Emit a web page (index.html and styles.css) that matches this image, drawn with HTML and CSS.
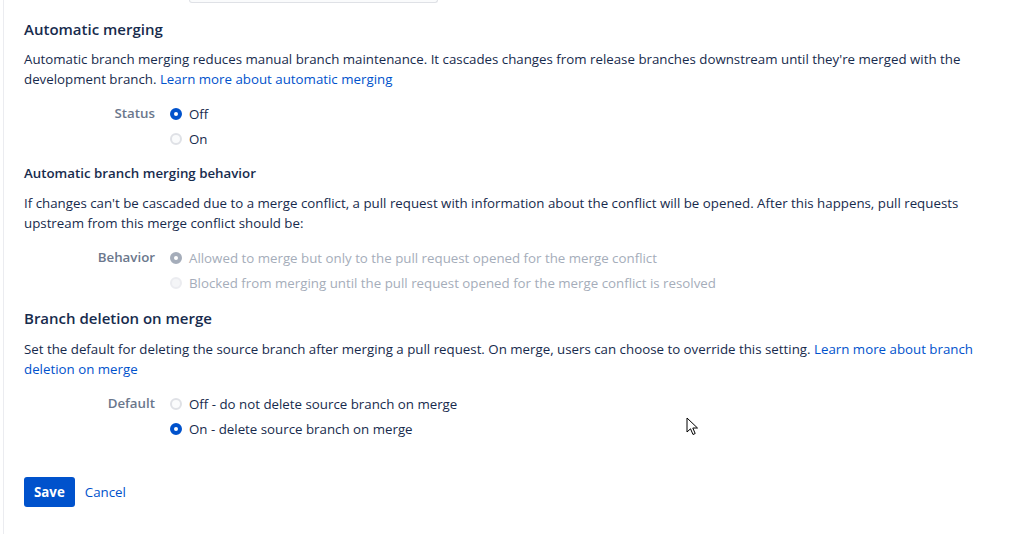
FILE: index.html
```html
<!DOCTYPE html>
<html>
<head>
    <title>Repository settings - Branches</title>
    <link rel="stylesheet" href="styles.css">
</head>
<body>

<div class="page">
    <!-- bottom edge of the field above, scrolled out of view -->
    <div class="field-edge"></div>

    <h2 class="section-title">Automatic merging</h2>
    <p class="desc">Automatic branch merging reduces manual branch maintenance. It cascades changes from release branches downstream until they're merged with the development branch. <a href="#">Learn more about automatic merging</a></p>

    <div class="form-row">
        <div class="row-label">Status</div>
        <div class="options">
            <label class="option"><span class="radio checked"></span>Off</label>
            <label class="option"><span class="radio"></span>On</label>
        </div>
    </div>

    <h3 class="sub-title">Automatic branch merging behavior</h3>
    <p class="desc">If changes can't be cascaded due to a merge conflict, a pull request with information about the conflict will be opened. After this happens, pull requests upstream from this merge conflict should be:</p>

    <div class="form-row">
        <div class="row-label">Behavior</div>
        <div class="options">
            <label class="option disabled"><span class="radio checked"></span>Allowed to merge but only to the pull request opened for the merge conflict</label>
            <label class="option disabled"><span class="radio"></span>Blocked from merging until the pull request opened for the merge conflict is resolved</label>
        </div>
    </div>

    <h2 class="section-title second">Branch deletion on merge</h2>
    <p class="desc after-second">Set the default for deleting the source branch after merging a pull request. On merge, users can choose to override this setting. <a href="#">Learn more about branch deletion on merge</a></p>

    <div class="form-row">
        <div class="row-label">Default</div>
        <div class="options">
            <label class="option"><span class="radio"></span>Off - do not delete source branch on merge</label>
            <label class="option"><span class="radio checked"></span>On - delete source branch on merge</label>
        </div>
    </div>

    <div class="actions">
        <button class="btn-save">Save</button>
        <a href="#" class="cancel">Cancel</a>
    </div>
</div>

<!-- mouse pointer captured in the screenshot -->
<svg class="pointer" width="14" height="20" viewBox="0 0 14 20">
    <path d="M1 1 L1 15 L4.5 11.8 L7 17.5 L9.2 16.5 L6.8 11 L11.5 11 Z" fill="#fff" stroke="#000" stroke-width="1" stroke-linejoin="miter"/>
</svg>

</body>
</html>
```

FILE: styles.css
```css
body {
    margin: 0;
    font-family: "Open Sans", Arial, sans-serif;
    font-size: 13.3px;
    color: #172B4D;
    background: #fff;
}
.page {
    margin-left: 3px;
    border-left: 1px solid #EBECF0;
    padding: 0 20px 26px 20px;
    min-height: 508px;
}
.field-edge {
    width: 247px;
    height: 2px;
    margin-left: 165px;
    border: 1px solid #DFE1E6;
    border-top: none;
    border-radius: 0 0 3px 3px;
    background: #FAFBFC;
}
.section-title {
    margin: 16px 0 0 0;
    font-size: 15px;
    font-weight: 600;
    line-height: 20px;
}
.section-title.second {
    margin-top: 13px;
}
.sub-title {
    margin: 12px 0 0 0;
    font-size: 13.3px;
    font-weight: 600;
    line-height: 20px;
}
.desc {
    margin: 10px 0 0 0;
    line-height: 20px;
}
.desc.after-second {
    margin-top: 11px;
}
a {
    color: #0052CC;
    text-decoration: none;
}
.form-row {
    display: grid;
    grid-template-columns: 131px 1fr;
    column-gap: 15px;
    margin-top: 12px;
}
.row-label {
    text-align: right;
    color: #6B778C;
    font-weight: 600;
    line-height: 25px;
}
.option {
    display: flex;
    align-items: center;
    height: 25px;
}
.option.disabled {
    color: #A5ADBA;
}
.radio {
    width: 8px;
    height: 8px;
    border: 2px solid #DFE1E6;
    background: #FAFBFC;
    border-radius: 50%;
    margin-right: 7px;
    box-sizing: content-box;
    position: relative;
}
.radio.checked {
    background: #0052CC;
    border-color: #0052CC;
}
.radio.checked::after {
    content: "";
    position: absolute;
    left: 2px;
    top: 2px;
    width: 4px;
    height: 4px;
    border-radius: 50%;
    background: #fff;
}
.disabled .radio {
    background: #F4F5F7;
    border-color: #EBECF0;
}
.disabled .radio.checked {
    background: #A5ADBA;
    border-color: #A5ADBA;
}
.actions {
    display: flex;
    align-items: center;
    gap: 10px;
    margin-top: 36px;
}
.btn-save {
    height: 30px;
    padding: 0 10px;
    background-color: #0052CC;
    color: #fff;
    border: none;
    border-radius: 3px;
    font-family: inherit;
    font-size: 13.3px;
    font-weight: 700;
    cursor: pointer;
}
.cancel {
    line-height: 30px;
}
.pointer {
    position: absolute;
    left: 686px;
    top: 417px;
}
```
